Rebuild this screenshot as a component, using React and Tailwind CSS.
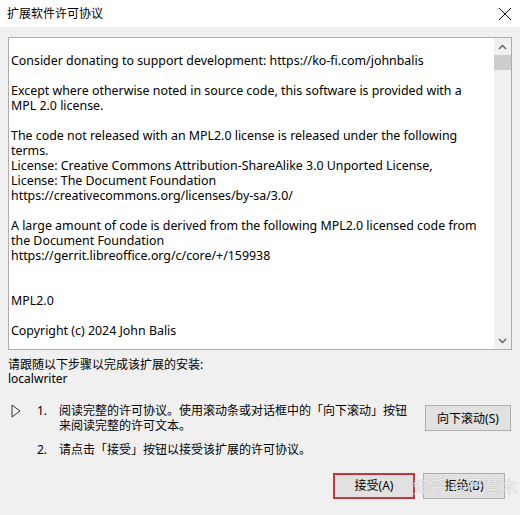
import React from "react";

const lines = [
  "",
  "Consider donating to support development: https://ko-fi.com/johnbalis",
  "",
  "Except where otherwise noted in source code, this software is provided with a",
  "MPL 2.0 license.",
  "",
  "The code not released with an MPL2.0 license is released under the following",
  "terms.",
  "License: Creative Commons Attribution-ShareAlike 3.0 Unported License,",
  "License: The Document Foundation",
  "https://creativecommons.org/licenses/by-sa/3.0/",
  "",
  "A large amount of code is derived from the following MPL2.0 licensed code from",
  "the Document Foundation",
  "https://gerrit.libreoffice.org/c/core/+/159938",
  "",
  "",
  "MPL2.0",
  "",
  "Copyright (c) 2024 John Balis",
];

const font = { fontFamily: '"Noto Sans", "Noto Sans CJK SC", sans-serif' };

const ScrollBar = () => (
  <div className="w-[17px] bg-[#f0f0f0] flex flex-col items-center">
    <div className="h-[17px] w-full flex items-center justify-center">
      <svg width="9" height="6" viewBox="0 0 9 6">
        <path d="M1 5 L4.5 1.5 L8 5" fill="none" stroke="#606060" strokeWidth="1.4" />
      </svg>
    </div>
    <div className="h-[15px] w-full bg-[#cdcdcd]" />
    <div className="flex-1" />
    <div className="h-[17px] w-full flex items-center justify-center">
      <svg width="9" height="6" viewBox="0 0 9 6">
        <path d="M1 1 L4.5 4.5 L8 1" fill="none" stroke="#606060" strokeWidth="1.4" />
      </svg>
    </div>
  </div>
);

const Button = ({ children, focused, className = "" }) => (
  <div
    className={`h-[26px] flex items-center justify-center bg-[#e1e1e1] text-[12px] text-black ${
      focused ? "border-2 border-[#c4353f]" : "border border-[#adadad]"
    } ${className}`}
  >
    {children}
  </div>
);

export default function App() {
  return (
    <div className="relative w-[520px] h-[515px] bg-[#f0f0f0] overflow-hidden text-black" style={font}>
      {/* title bar */}
      <div className="h-[27px] bg-white flex items-center justify-between pl-[7px] pr-[8px]">
        <span className="text-[12px]">扩展软件许可协议</span>
        <svg width="14" height="14" viewBox="0 0 14 14">
          <path d="M1 1 L13 13 M13 1 L1 13" stroke="#111" strokeWidth="1" />
        </svg>
      </div>

      <div className="px-[8px] pt-[10px]">
        {/* license text */}
        <div className="h-[313px] border border-[#adadad] bg-white flex">
          <div className="flex-1 pl-[2px] text-[12.4px] leading-[15px] whitespace-pre overflow-hidden">
            {lines.map((l, i) => (
              <div key={i} className="h-[15px]">{l}</div>
            ))}
          </div>
          <ScrollBar />
        </div>

        <div className="mt-[8px] text-[12px] leading-[14px]">
          <div>请跟随以下步骤以完成该扩展的安装:</div>
          <div>localwriter</div>
        </div>

        {/* steps */}
        <div className="mt-[17px] flex flex-col gap-[9px] text-[12px] leading-[15px]">
          <div className="flex items-start">
            <div className="w-[29px] pt-[1px] pl-[3px]">
              <svg width="10" height="14" viewBox="0 0 10 14">
                <path d="M1 1 L9 7 L1 13 Z" fill="none" stroke="#333" strokeWidth="1" />
              </svg>
            </div>
            <div className="w-[22px]">1.</div>
            <div className="w-[356px]">
              <div>阅读完整的许可协议。使用滚动条或对话框中的「向下滚动」按钮</div>
              <div>来阅读完整的许可文本。</div>
            </div>
            <Button className="ml-auto mr-[1px] mt-[2px] w-[86px]">向下滚动(S)</Button>
          </div>
          <div className="flex items-start">
            <div className="w-[29px]" />
            <div className="w-[22px]">2.</div>
            <div>请点击「接受」按钮以接受该扩展的许可协议。</div>
          </div>
        </div>

        <div className="mt-[16px] flex justify-end gap-[8px] pr-[7px]">
          <Button focused className="w-[82px]">接受(A)</Button>
          <Button className="w-[82px]">拒绝(B)</Button>
        </div>
      </div>

      {/* watermark */}
      <div className="absolute left-[413px] top-[476px] whitespace-nowrap text-[17px] leading-[22px] text-white/80 [text-shadow:0_0_1px_rgba(0,0,0,0.35)]">
        知乎 @严慧木
      </div>
    </div>
  );
}
